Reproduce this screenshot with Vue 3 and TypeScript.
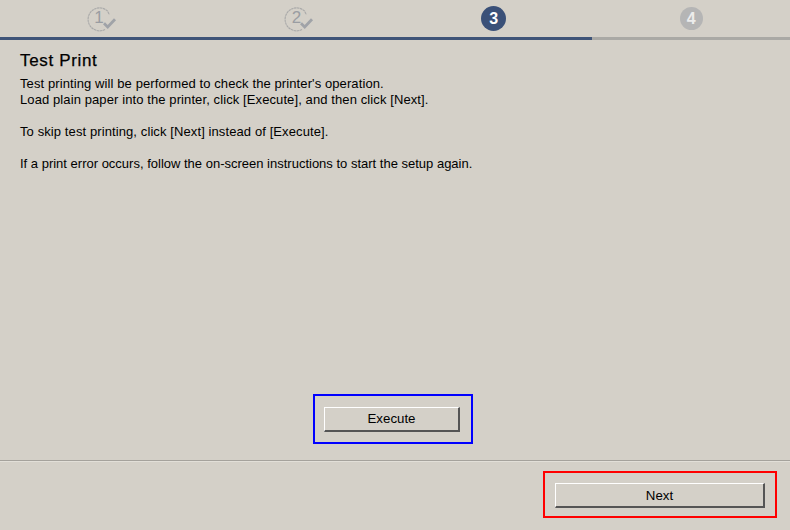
<script setup lang="ts">
interface Step { n: number; state: 'done' | 'active' | 'todo' }
const steps: Step[] = [
  { n: 1, state: 'done' },
  { n: 2, state: 'done' },
  { n: 3, state: 'active' },
  { n: 4, state: 'todo' },
]
</script>

<template>
  <div class="page">
    <header class="stepper">
      <div v-for="s in steps" :key="s.n" class="step">
        <div v-if="s.state === 'done'" class="done">
          <svg width="32" height="28" viewBox="0 0 32 28" fill="none">
            <path d="M18 24.5A11.5 11.5 0 1 1 20.5 6l1.8 3.4" stroke="#a9a9a9" stroke-width="1.1" stroke-dasharray="2.5 .5" />
            <path d="M17 18.3l3.7 3.7 7.3-7.7" stroke="#a0a3a8" stroke-width="2.8" />
          </svg>
          <span class="done-num">{{ s.n }}</span>
        </div>
        <div v-else class="badge" :class="s.state">{{ s.n }}</div>
      </div>
    </header>
    <div class="progress"><div class="progress-fill"></div></div>

    <main class="content">
      <h1 class="title">Test Print</h1>
      <p class="text wide">Test printing will be performed to check the printer's operation.<br>Load plain paper into the printer, click [Execute], and then click [Next].</p>
      <p class="text wide">To skip test printing, click [Next] instead of [Execute].</p>
      <p class="text">If a print error occurs, follow the on-screen instructions to start the setup again.</p>
      <div class="exec-row">
        <div class="mark blue"><button class="btn exec">Execute</button></div>
      </div>
    </main>

    <footer class="footer">
      <div class="mark red"><button class="btn next">Next</button></div>
    </footer>
  </div>
</template>

<style>
html, body { margin: 0; background: #d4d0c8; }
</style>

<style scoped>
.page {
  width: 790px;
  height: 530px;
  overflow: hidden;
  display: flex;
  flex-direction: column;
  background: #d4d0c8;
  color: #000;
  font-family: "Liberation Sans", Arial, sans-serif;
  font-size: 13px;
}
.stepper {
  display: grid;
  grid-template-columns: repeat(4, 1fr);
  height: 37px;
}
.step {
  display: flex;
  align-items: center;
  justify-content: center;
}
.done {
  position: relative;
  width: 32px;
  height: 28px;
  margin-left: 8px;
  margin-top: 1px;
}
.done svg { display: block; }
.done-num {
  position: absolute;
  left: 7.5px;
  top: 4px;
  font-size: 17px;
  line-height: 18px;
  color: #9a9da2;
}
.badge {
  border-radius: 50%;
  display: flex;
  align-items: center;
  justify-content: center;
  color: #fff;
  font-weight: 700;
  font-size: 16px;
}
.badge.active { background: #3a5078; width: 25px; height: 25px; }
.badge.todo { background: #b5b5b5; color: #ececec; width: 23px; height: 23px; }
.progress {
  height: 3px;
  background: #aaa9a5;
}
.progress-fill {
  width: 592px;
  height: 100%;
  background: #3f5478;
}
.content {
  flex: 1;
  display: flex;
  flex-direction: column;
  padding: 0 20px;
  min-height: 0;
}
.title {
  margin: 11px 0 6px;
  font-size: 17px;
  line-height: 19px;
  font-weight: 400;
  letter-spacing: 0.65px;
  -webkit-text-stroke: 0.25px #000;
}
.text {
  margin: 0 0 16px;
  line-height: 16px;
}
.wide { letter-spacing: 0.1px; }
.exec-row {
  margin-top: auto;
  margin-bottom: 16px;
  display: flex;
  justify-content: center;
  padding-right: 4px;
}
.mark {
  box-sizing: border-box;
  display: flex;
  align-items: center;
  justify-content: center;
  border-width: 2px;
  border-style: solid;
}
.blue { border-color: #0000ff; width: 160px; height: 50px; }
.red { border-color: #ff0000; width: 234px; height: 47px; padding-top: 2px; }
.btn {
  box-sizing: border-box;
  height: 25px;
  padding: 0;
  background: #d4d0c8;
  color: #000;
  font: 13.3px "Liberation Sans", Arial, sans-serif;
  border-style: solid;
  border-width: 1px 2px 2px 1px;
  border-color: #fff #555 #555 #fff;
}
.exec { width: 136px; margin-right: 2px; }
.next { width: 210px; }
.footer {
  height: 70px;
  box-sizing: border-box;
  border-top: 1px solid #a5a29c;
  box-shadow: inset 0 1px 0 #e2dfd8;
  display: flex;
  justify-content: flex-end;
  padding: 10px 13px 0 0;
}
</style>
